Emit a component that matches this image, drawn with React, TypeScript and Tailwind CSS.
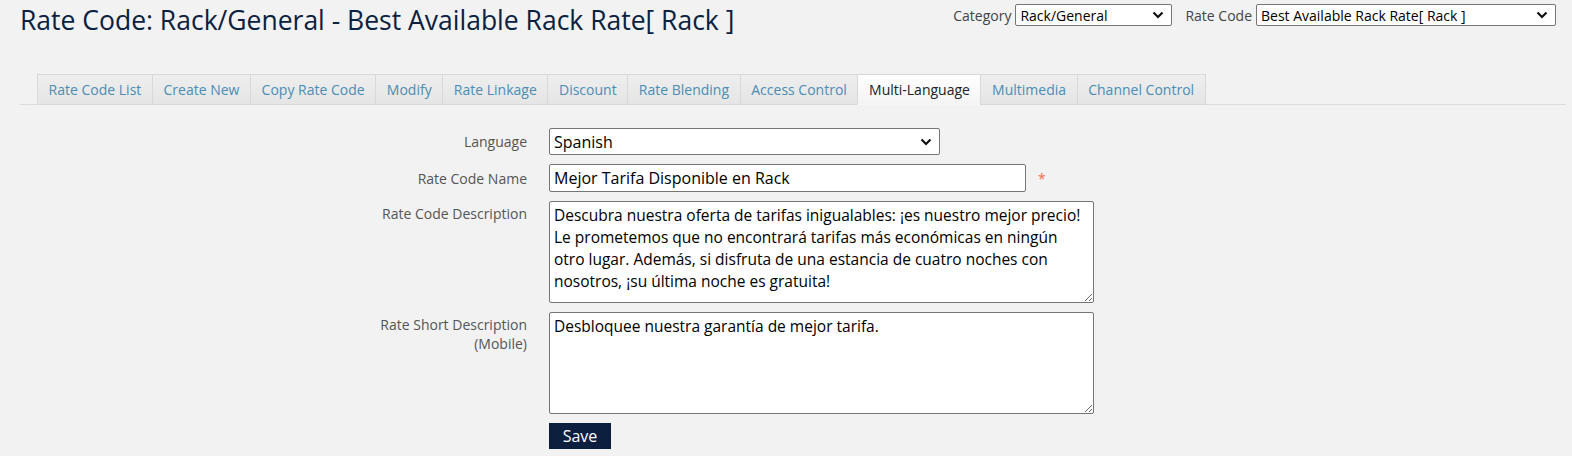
import React from "react";

const font = { fontFamily: '"Open Sans", "Noto Sans", Arial, sans-serif' };

function Chevron() {
  return (
    <svg width="12" height="8" viewBox="0 0 12 8" className="pointer-events-none absolute right-[8px] top-1/2 -translate-y-1/2">
      <path d="M1.5 1.5 L6 6 L10.5 1.5" fill="none" stroke="#111" strokeWidth="2.2" />
    </svg>
  );
}

function Select({ value, className }: { value: string; className: string }) {
  return (
    <div className={"relative " + className}>
      <select
        defaultValue={value}
        className="h-full w-full appearance-none rounded-[2px] border border-[#767676] bg-white pl-[4px] pr-[24px] text-black outline-none"
      >
        <option>{value}</option>
      </select>
      <Chevron />
    </div>
  );
}

const tabs = [
  "Rate Code List",
  "Create New",
  "Copy Rate Code",
  "Modify",
  "Rate Linkage",
  "Discount",
  "Rate Blending",
  "Access Control",
  "Multi-Language",
  "Multimedia",
  "Channel Control",
];

export default function App() {
  return (
    <div className="h-[456px] w-full overflow-hidden bg-[#f2f2f2]" style={font}>
      <div className="flex items-start justify-between pl-[20px] pr-[16px]">
        <h1 className="mt-[2px] text-[26.5px] leading-[36px] text-[#0b2140]">
          Rate Code: Rack/General - Best Available Rack Rate[ Rack ]
        </h1>
        <div className="mt-[4px] flex items-center text-[14px] text-[#444]">
          <span className="mr-[4px]">Category</span>
          <Select value="Rack/General" className="h-[22px] w-[157px] text-[14px]" />
          <span className="ml-[13px] mr-[4px]">Rate Code</span>
          <Select value="Best Available Rack Rate[ Rack ]" className="h-[22px] w-[300px] text-[14px]" />
        </div>
      </div>

      <div className="ml-[20px] mr-[6px] mt-[36px] flex border-b border-[#dcdcdc] pl-[17px]">
        {tabs.map((t) => {
          const active = t === "Multi-Language";
          return (
            <div
              key={t}
              className={
                "-mb-px -ml-px first:ml-0 flex h-[31px] items-center border border-[#d8d8d8] px-[10.6px] text-[14px] " +
                (active
                  ? "border-b-[#f6f6f6] bg-gradient-to-b from-white to-[#f4f4f4] text-[#222]"
                  : "bg-gradient-to-b from-[#eeeeee] to-[#e5e5e5] text-[#4b8db3]")
              }
            >
              {t}
            </div>
          );
        })}
      </div>

      <div className="mt-[23px] grid grid-cols-[528px_auto] gap-x-[21px] text-[14px]">
        <div className="flex h-[27px] items-center justify-end pr-px text-[#555]">Language</div>
        <div>
          <Select value="Spanish" className="h-[27px] w-[391px] text-[16px]" />
        </div>

        <div className="mt-[9px] flex h-[28px] items-center justify-end pr-px text-[#555]">Rate Code Name</div>
        <div className="mt-[9px] flex items-center">
          <input
            defaultValue="Mejor Tarifa Disponible en Rack"
            className="h-[28px] w-[477px] rounded-[2px] border border-[#767676] bg-white px-[4px] text-[16px] text-black outline-none"
          />
          <span className="ml-[12px] text-[14px] text-[#f06a4f]">*</span>
        </div>

        <div className="mt-[9px] pr-px pt-[2px] text-right text-[#555]">Rate Code Description</div>
        <div className="mt-[9px]">
          <textarea
            defaultValue="Descubra nuestra oferta de tarifas inigualables: ¡es nuestro mejor precio! Le prometemos que no encontrará tarifas más económicas en ningún otro lugar. Además, si disfruta de una estancia de cuatro noches con nosotros, ¡su última noche es gratuita!"
            className="block h-[102px] w-[545px] rounded-[2px] border border-[#767676] bg-white px-[4px] py-[2px] text-[15.5px] leading-[22px] text-black outline-none"
          />
        </div>

        <div className="mt-[9px] pr-px pt-[3px] text-right leading-[19px] text-[#555]">
          Rate Short Description
          <br />
          (Mobile)
        </div>
        <div className="mt-[9px]">
          <textarea
            defaultValue="Desbloquee nuestra garantía de mejor tarifa."
            className="block h-[102px] w-[545px] rounded-[2px] border border-[#767676] bg-white px-[4px] py-[2px] text-[15.5px] leading-[22px] text-black outline-none"
          />
        </div>

        <div />
        <div className="mt-[9px]">
          <button className="h-[26px] w-[62px] bg-[#0c1f3f] text-[16px] text-white">Save</button>
        </div>
      </div>
    </div>
  );
}
